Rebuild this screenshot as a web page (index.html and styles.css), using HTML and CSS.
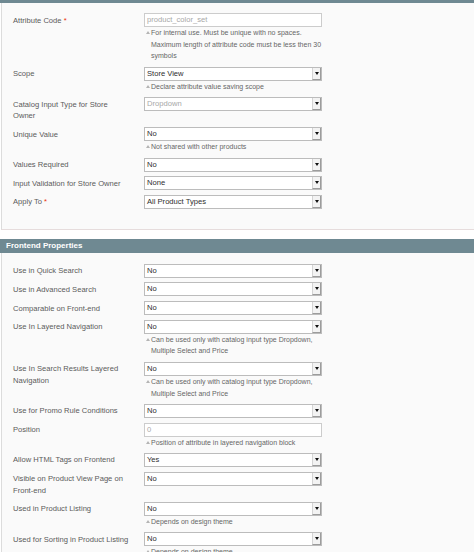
FILE: index.html
```html
<!DOCTYPE html>
<html lang="en">
<head>
<meta charset="utf-8">
<title>Attribute Properties</title>
<link rel="stylesheet" href="styles.css">
</head>
<body>
<div class="prev-head"></div>

<div class="fieldset fs-main">
  <div class="row">
    <div class="label">Attribute Code <span class="req">*</span></div>
    <div class="value">
      <div class="input placeholder">product_color_set</div>
      <div class="note">For internal use. Must be unique with no spaces. Maximum length of attribute code must be less then 30 symbols</div>
    </div>
  </div>
  <div class="row">
    <div class="label">Scope</div>
    <div class="value">
      <div class="select"><span class="v">Store View</span><span class="b"><svg width="4" height="3" viewBox="0 0 4 3"><path d="M0 0H4L2 3Z" fill="#111"/></svg></span></div>
      <div class="note">Declare attribute value saving scope</div>
    </div>
  </div>
  <div class="row">
    <div class="label">Catalog Input Type for Store Owner</div>
    <div class="value">
      <div class="select disabled"><span class="v">Dropdown</span><span class="b"><svg width="4" height="3" viewBox="0 0 4 3"><path d="M0 0H4L2 3Z" fill="#111"/></svg></span></div>
    </div>
  </div>
  <div class="row">
    <div class="label">Unique Value</div>
    <div class="value">
      <div class="select"><span class="v">No</span><span class="b"><svg width="4" height="3" viewBox="0 0 4 3"><path d="M0 0H4L2 3Z" fill="#111"/></svg></span></div>
      <div class="note">Not shared with other products</div>
    </div>
  </div>
  <div class="row">
    <div class="label">Values Required</div>
    <div class="value">
      <div class="select"><span class="v">No</span><span class="b"><svg width="4" height="3" viewBox="0 0 4 3"><path d="M0 0H4L2 3Z" fill="#111"/></svg></span></div>
    </div>
  </div>
  <div class="row">
    <div class="label">Input Validation for Store Owner</div>
    <div class="value">
      <div class="select"><span class="v">None</span><span class="b"><svg width="4" height="3" viewBox="0 0 4 3"><path d="M0 0H4L2 3Z" fill="#111"/></svg></span></div>
    </div>
  </div>
  <div class="row">
    <div class="label">Apply To <span class="req">*</span></div>
    <div class="value">
      <div class="select"><span class="v">All Product Types</span><span class="b"><svg width="4" height="3" viewBox="0 0 4 3"><path d="M0 0H4L2 3Z" fill="#111"/></svg></span></div>
    </div>
  </div>
</div>

<div class="section-head">Frontend Properties</div>

<div class="fieldset fs-front">
  <div class="row">
    <div class="label">Use in Quick Search</div>
    <div class="value">
      <div class="select"><span class="v">No</span><span class="b"><svg width="4" height="3" viewBox="0 0 4 3"><path d="M0 0H4L2 3Z" fill="#111"/></svg></span></div>
    </div>
  </div>
  <div class="row">
    <div class="label">Use in Advanced Search</div>
    <div class="value">
      <div class="select"><span class="v">No</span><span class="b"><svg width="4" height="3" viewBox="0 0 4 3"><path d="M0 0H4L2 3Z" fill="#111"/></svg></span></div>
    </div>
  </div>
  <div class="row">
    <div class="label">Comparable on Front-end</div>
    <div class="value">
      <div class="select"><span class="v">No</span><span class="b"><svg width="4" height="3" viewBox="0 0 4 3"><path d="M0 0H4L2 3Z" fill="#111"/></svg></span></div>
    </div>
  </div>
  <div class="row">
    <div class="label">Use In Layered Navigation</div>
    <div class="value">
      <div class="select"><span class="v">No</span><span class="b"><svg width="4" height="3" viewBox="0 0 4 3"><path d="M0 0H4L2 3Z" fill="#111"/></svg></span></div>
      <div class="note">Can be used only with catalog input type Dropdown, Multiple Select and Price</div>
    </div>
  </div>
  <div class="row">
    <div class="label">Use In Search Results Layered Navigation</div>
    <div class="value">
      <div class="select"><span class="v">No</span><span class="b"><svg width="4" height="3" viewBox="0 0 4 3"><path d="M0 0H4L2 3Z" fill="#111"/></svg></span></div>
      <div class="note">Can be used only with catalog input type Dropdown, Multiple Select and Price</div>
    </div>
  </div>
  <div class="row">
    <div class="label">Use for Promo Rule Conditions</div>
    <div class="value">
      <div class="select"><span class="v">No</span><span class="b"><svg width="4" height="3" viewBox="0 0 4 3"><path d="M0 0H4L2 3Z" fill="#111"/></svg></span></div>
    </div>
  </div>
  <div class="row">
    <div class="label">Position</div>
    <div class="value">
      <div class="input placeholder">0</div>
      <div class="note">Position of attribute in layered navigation block</div>
    </div>
  </div>
  <div class="row">
    <div class="label">Allow HTML Tags on Frontend</div>
    <div class="value">
      <div class="select"><span class="v">Yes</span><span class="b"><svg width="4" height="3" viewBox="0 0 4 3"><path d="M0 0H4L2 3Z" fill="#111"/></svg></span></div>
    </div>
  </div>
  <div class="row">
    <div class="label">Visible on Product View Page on Front-end</div>
    <div class="value">
      <div class="select"><span class="v">No</span><span class="b"><svg width="4" height="3" viewBox="0 0 4 3"><path d="M0 0H4L2 3Z" fill="#111"/></svg></span></div>
    </div>
  </div>
  <div class="row">
    <div class="label">Used in Product Listing</div>
    <div class="value">
      <div class="select"><span class="v">No</span><span class="b"><svg width="4" height="3" viewBox="0 0 4 3"><path d="M0 0H4L2 3Z" fill="#111"/></svg></span></div>
      <div class="note">Depends on design theme</div>
    </div>
  </div>
  <div class="row">
    <div class="label">Used for Sorting in Product Listing</div>
    <div class="value">
      <div class="select"><span class="v">No</span><span class="b"><svg width="4" height="3" viewBox="0 0 4 3"><path d="M0 0H4L2 3Z" fill="#111"/></svg></span></div>
      <div class="note">Depends on design theme</div>
    </div>
  </div>
</div>
</body>
</html>
```
FILE: styles.css
```css
html, body {
  margin: 0;
  padding: 0;
  background: #ffffff;
  overflow: hidden;
}

body {
  font-family: "Liberation Sans", Arial, sans-serif;
  color: #555555;
}

.prev-head {
  height: 3px;
  background: #6f8992;
}

.fieldset {
  margin-left: 1px;
  background: #fafafa;
  border-left: 1px solid #dcdcdc;
  border-bottom: 1px solid #e6dcdc;
  padding-left: 11px;
}

.fs-main {
  padding-top: 10px;
  padding-bottom: 15px;
}

.fs-front {
  padding-top: 11px;
  padding-bottom: 20px;
}

.section-head {
  margin-top: 9px;
  height: 14px;
  line-height: 14px;
  background: #6f8992;
  color: #ffffff;
  font-weight: bold;
  font-size: 8px;
  padding-left: 6px;
}

.row {
  display: grid;
  grid-template-columns: 131px 178px;
  margin-bottom: 4.7px;
}

.label {
  max-width: 118px;
  padding: 1.5px 0 1px;
  font-size: 7.6px;
  line-height: 11.4px;
  color: #5a5a5a;
}

.req {
  color: #eb340a;
}

.input {
  box-sizing: border-box;
  height: 14px;
  border: 1px solid #cccccc;
  background: #ffffff;
  font-size: 7.6px;
  line-height: 12px;
  padding-left: 2px;
  color: #333333;
}

.input.placeholder {
  color: #a8a8a8;
}

.select {
  box-sizing: border-box;
  display: flex;
  height: 14px;
  border: 1px solid #bcbcbc;
  background: #ffffff;
}

.select .v {
  flex: 1;
  padding-left: 2px;
  font-size: 7.6px;
  line-height: 12px;
  color: #2e2e2e;
  white-space: nowrap;
  overflow: hidden;
}

.select.disabled .v {
  color: #a8a8a8;
}

.select .b {
  box-sizing: border-box;
  width: 9px;
  display: flex;
  align-items: center;
  justify-content: center;
  background: #f3f3f3;
  border-left: 1px solid #d4d4d4;
  border-right: 1px solid #9c9c9c;
  border-bottom: 1px solid #9c9c9c;
}

.select .b svg {
  display: block;
}

.note {
  padding-left: 7px;
  font-size: 7px;
  line-height: 11.7px;
  color: #666666;
}

.note::before {
  content: "";
  display: inline-block;
  width: 0;
  height: 0;
  border-left: 2px solid transparent;
  border-right: 2px solid transparent;
  border-bottom: 3px solid #b4b4b4;
  margin-left: -5px;
  margin-right: 1px;
  vertical-align: 1px;
}
```
